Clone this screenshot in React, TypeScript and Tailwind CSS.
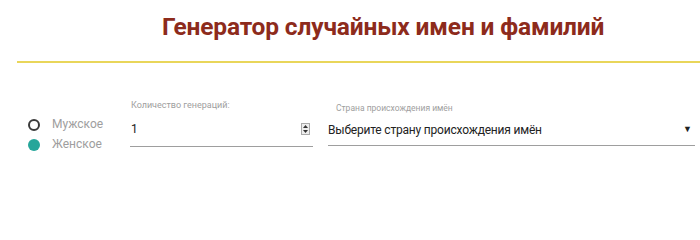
import React from "react";

export default function App() {
  return (
    <div className="w-[700px] h-[220px] bg-white overflow-hidden" style={{ fontFamily: "Roboto, 'Noto Sans', sans-serif" }}>
      <div className="h-[61px] flex items-center pl-[162px] pb-[6px]">
        <h1 className="text-[24.5px] font-bold text-[#8d2b1c] leading-none tracking-[-0.15px] whitespace-nowrap">
          Генератор случайных имен и фамилий
        </h1>
      </div>
      <div className="ml-[17px] h-[2px] bg-[#e9d65a]" />
      <div className="flex items-start pt-[36px]">
        <div className="pl-[28px] pt-[19px] flex flex-col gap-[7px] w-[130px]">
          <label className="flex items-center gap-[12px] text-[12px] text-[#9e9e9e] leading-[13px]">
            <span className="w-[12px] h-[12px] rounded-full border-[2px] border-[#3a3a3a] shrink-0" />
            Мужское
          </label>
          <label className="flex items-center gap-[12px] text-[12px] text-[#9e9e9e] leading-[13px]">
            <span className="w-[12px] h-[12px] rounded-full bg-[#26a69a] shrink-0" />
            Женское
          </label>
        </div>
        <div className="w-[183px] flex flex-col">
          <div className="text-[9px] text-[#9e9e9e] leading-[12px] pl-[1px]">Количество генераций:</div>
          <div className="h-[36px] flex items-center justify-between border-b border-[#9e9e9e]">
            <span className="text-[12px] text-[#222] pl-[1px]">1</span>
            <span className="mr-[3px] w-[9px] h-[12px] border border-[#aaa] bg-[#eee] flex flex-col items-center justify-center gap-[2px]">
              <svg width="5" height="3" viewBox="0 0 5 3"><path d="M0 3 L2.5 0 L5 3 Z" fill="#333" /></svg>
              <svg width="5" height="3" viewBox="0 0 5 3"><path d="M0 0 L2.5 3 L5 0 Z" fill="#333" /></svg>
            </span>
          </div>
        </div>
        <div className="ml-[15px] w-[367px] flex flex-col">
          <div className="text-[8.5px] text-[#9e9e9e] leading-[12px] pt-[3px] pl-[8px]">Страна происхождения имён</div>
          <div className="h-[32px] flex items-center justify-between border-b border-[#9e9e9e]">
            <span className="text-[12px] text-[#222] tracking-[-0.2px]">Выберите страну происхождения имён</span>
            <span className="text-[9px] text-[#222] mr-[3px]">▼</span>
          </div>
        </div>
      </div>
    </div>
  );
}
